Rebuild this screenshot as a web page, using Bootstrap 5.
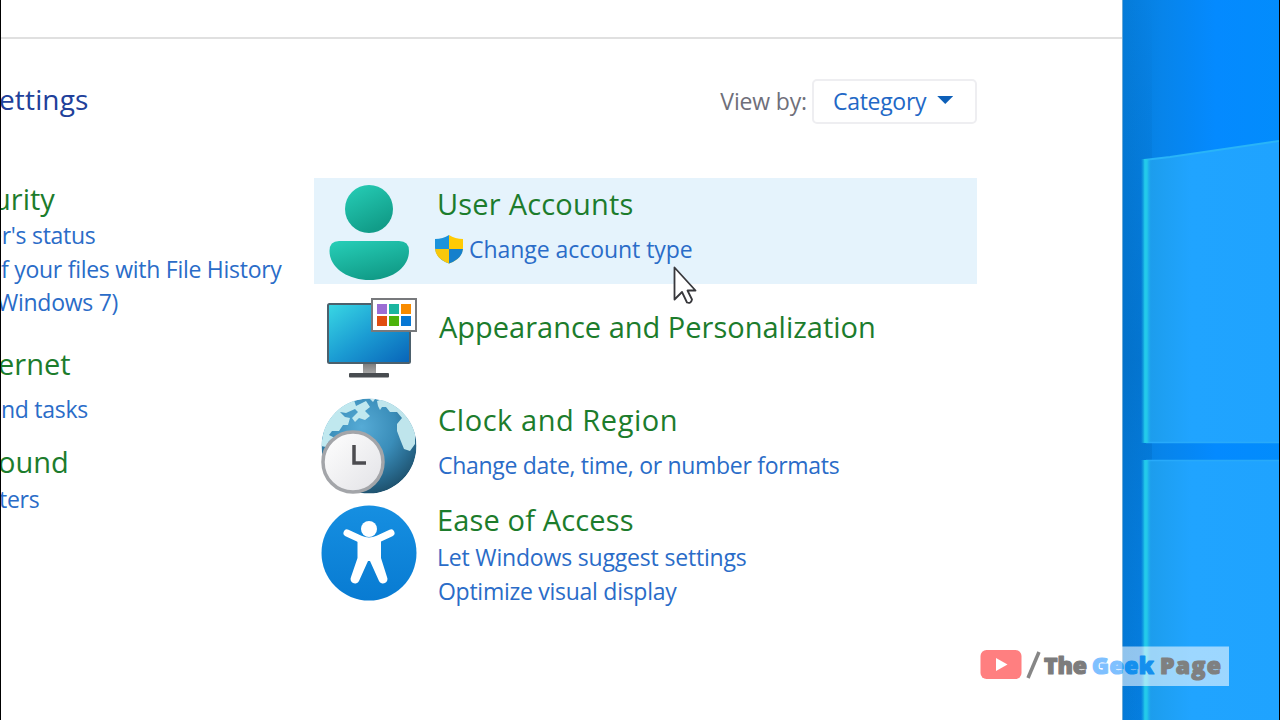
<!DOCTYPE html>
<html lang="en">
<head>
<meta charset="utf-8">
<meta name="viewport" content="width=device-width, initial-scale=1">
<title>Control Panel</title>
<link href="https://cdn.jsdelivr.net/npm/bootstrap@5.3.0/dist/css/bootstrap.min.css" rel="stylesheet">
<style>
  body { font-family: "Open Sans", "Noto Sans", sans-serif; background: #000; width: 1280px; height: 720px; overflow: hidden; }
  .desktop { width: 1280px; height: 720px; padding: 0 1px; }
  .panel { width: 1121px; background: #fff; }
  .topline { height: 39px; border-bottom: 2px solid #e0e0e0; }
  .toolbar-row { height: 45px; margin-top: 40px; padding-right: 145px; }
  .page-title { font-size: 28px; line-height: 40px; color: #20409a; margin-left: -2px; letter-spacing: .15px; }
  .view-label { font-size: 23px; line-height: 45px; color: #6f6f7a; letter-spacing: -.15px; margin-right: 5px; }
  .view-btn { width: 165px; height: 45px; border: 2px solid #eeeef1; border-radius: 5px; font-size: 23px; line-height: 41px; color: #2268c6; background: #fff; padding: 0 0 0 19px; letter-spacing: -.3px; }
  .tri { width: 16px; height: 8px; margin: 0 0 3px 11px; background: #0d5fb8; clip-path: polygon(0 0, 100% 0, 50% 100%); }
  .cat { font-size: 29px; line-height: 40px; color: #1c7c2c; white-space: nowrap; font-weight: 400; margin: 0; }
  .task { font-size: 23px; line-height: 34px; color: #2a6cc8; white-space: nowrap; text-decoration: none; display: block; letter-spacing: -.27px; }
  .columns { margin-top: 54px; }
  .col-left { width: 313px; padding-top: 1px; }
  .col-left .block { height: 165px; }
  .col-left .block + .block { height: 98px; }
  .col-right { width: 663px; }
  .entry { height: 107px; padding: 6px 0 0 7px; }
  .entry.hot { background: #e5f3fc; height: 106px; margin-bottom: 1px; }
  .ico { width: 96px; height: 96px; flex: none; }
  .txt { margin-left: 21px; }
  .shield { width: 28px; height: 29px; margin: 3px 6px 0 -3px; }
  .cursor { left: 672px; top: 265px; }
  .brand { left: 978px; top: 644px; }
  .brand text { font-family: "Open Sans", sans-serif; font-weight: 800; font-size: 23px; stroke-width: 1.2; stroke-linejoin: round; }
</style>
</head>
<body>
<div class="desktop d-flex position-relative">
  <main class="panel overflow-hidden">
    <div class="topline"></div>
    <header class="toolbar-row d-flex justify-content-between">
      <h1 class="page-title">ettings</h1>
      <div class="d-flex">
        <span class="view-label">View by:</span>
        <button type="button" class="view-btn d-flex align-items-center"><span>Category</span><span class="tri"></span></button>
      </div>
    </header>
    <div class="columns d-flex">
      <section class="col-left">
        <div class="block">
          <h2 class="cat" style="text-indent:-8px">urity</h2>
          <a class="task" style="text-indent:-12px;line-height:33px">er's status</a>
          <a class="task">f your files with File History</a>
          <a class="task" style="text-indent:-4px;line-height:33px">Windows 7)</a>
        </div>
        <div class="block">
          <h2 class="cat" style="text-indent:-3px">ernet</h2>
          <a class="task mt-2">nd tasks</a>
        </div>
        <div class="block">
          <h2 class="cat" style="text-indent:-3px">ound</h2>
          <a class="task" style="text-indent:-2px">ters</a>
        </div>
      </section>
      <section class="col-right">
        <div class="entry hot d-flex">
          <svg class="ico" viewBox="0 0 96 96">
            <defs><linearGradient id="teal" x1="0" y1="0" x2=".5" y2="1"><stop offset="0" stop-color="#27cfb8"/><stop offset="1" stop-color="#119c88"/></linearGradient></defs>
            <circle cx="48" cy="25" r="24" fill="url(#teal)"/>
            <path d="M18 57H78Q88 57 88 67C88 84 70 96 48.500 96S8.500 84 8.500 67Q8.500 57 18 57Z" fill="url(#teal)"/>
          </svg>
          <div class="txt">
            <h2 class="cat" style="letter-spacing:.2px;text-indent:-1px">User Accounts</h2>
            <div class="d-flex mt-2">
              <svg class="shield" viewBox="0 0 28 29">
                <path d="M14 0Q8 4 0 4V13Q1 24 14 28.500Z" fill="#1c93dc"/>
                <path d="M14 0Q20 4 28 4V13Q27 24 14 28.500Z" fill="#ffcb05"/>
                <path d="M0 14H14V28.500Q1 24 0 14Z" fill="#f8c80c"/>
                <path d="M14 14H28Q27 24 14 28.500Z" fill="#1580cc"/>
              </svg>
              <a class="task" style="letter-spacing:-.05px">Change account type</a>
            </div>
          </div>
        </div>
        <div class="entry d-flex">
          <svg class="ico" viewBox="0 0 96 96">
            <defs>
              <linearGradient id="scr" x1="0" y1="0" x2="1" y2="1"><stop offset="0" stop-color="#39d8e4"/><stop offset=".5" stop-color="#1b9cd3"/><stop offset="1" stop-color="#0863b8"/></linearGradient>
              <linearGradient id="neck" x1="0" y1="0" x2="0" y2="1"><stop offset="0" stop-color="#777"/><stop offset="1" stop-color="#aaa"/></linearGradient>
            </defs>
            <rect x="42" y="71" width="13" height="12" fill="url(#neck)"/>
            <rect x="28" y="82" width="40" height="4.500" rx="1" fill="#484c50"/>
            <rect x="7" y="13" width="82" height="59" rx="1.500" fill="url(#scr)" stroke="#4c606c" stroke-width="2"/>
            <rect x="51" y="8" width="44" height="32" fill="#fff" stroke="#77797c" stroke-width="2"/>
            <path fill="#9b6dd4" d="M56 13h10v10H56z"/><path fill="#1bb5a0" d="M68 13h10v10H68z"/><path fill="#f88b00" d="M80 13h10v10H80z"/>
            <path fill="#e04e10" d="M56 25h10v10H56z"/><path fill="#4db30c" d="M68 25h10v10H68z"/><path fill="#0878d4" d="M80 25h10v10H80z"/>
          </svg>
          <div class="txt pt-3"><h2 class="cat" style="text-indent:1px">Appearance and Personalization</h2></div>
        </div>
        <div class="entry d-flex">
          <svg class="ico" viewBox="0 0 96 96">
            <defs>
              <radialGradient id="sea" cx=".42" cy=".3" r=".72"><stop offset="0" stop-color="#56abd6"/><stop offset=".5" stop-color="#3a8db9"/><stop offset=".8" stop-color="#28698d"/><stop offset="1" stop-color="#1e516d"/></radialGradient>
              <linearGradient id="face" x1="0" y1="0" x2="1" y2="1"><stop offset="0" stop-color="#fff"/><stop offset="1" stop-color="#e2e2e6"/></linearGradient>
              <clipPath id="gl"><circle cx="48" cy="48" r="47.500"/></clipPath>
            </defs>
            <g clip-path="url(#gl)">
              <circle cx="48" cy="48" r="47.500" fill="url(#sea)"/>
              <path d="M0 48L4 26L19 9L33 2L35 8L45 3L49 9L44 13L49 18L44 22L38 20L34 24L31 20L37 14L34 11L25 15L19 14L24 19L29 20L27 27L22 27L18 33L11 33L8 37L14 40L8 43L5 49Z" fill="#c0e8ef"/>
              <path d="M56 3L64 0L79 7L90 22L94 35L94 46L89 53L83 51L79 41L76 33L76 26L81 20L76 14L69 14L65 9L61 9L59 12L57 8Z" fill="#bfe5ec"/>
              <path d="M49 1L54 1L52 4Z" fill="#c8e8ef"/>
            </g>
            <circle cx="32" cy="64" r="30" fill="url(#face)" stroke="#a3a5a9" stroke-width="3.500"/>
            <path d="M33 47V65H45" fill="none" stroke="#4c4c50" stroke-width="3.500"/>
          </svg>
          <div class="txt" style="padding-top:2px"><h2 class="cat" style="letter-spacing:.55px">Clock and Region</h2>
            <a class="task" style="letter-spacing:-.3px;margin-top:8px">Change date, time, or number formats</a></div>
        </div>
        <div class="entry d-flex">
          <svg class="ico" viewBox="0 0 96 96">
            <defs><linearGradient id="acc" x1="0" y1="0" x2="0" y2="1"><stop offset="0" stop-color="#168fe1"/><stop offset="1" stop-color="#087bd2"/></linearGradient></defs>
            <circle cx="48" cy="48" r="47.500" fill="url(#acc)"/>
            <circle cx="48" cy="24" r="8" fill="#fff"/>
            <path d="M26 28L39 34Q48 38 57 34L70 28" fill="none" stroke="#fff" stroke-width="7" stroke-linecap="round" stroke-linejoin="round"/>
            <path d="M36.500 33Q48 40 60 33V53L66 72A4 4 0 0 1 58 76L49 56H47L38 76A4 4 0 0 1 30 72L36.500 53Z" fill="#fff"/>
          </svg>
          <div class="txt" style="margin-top:-6px;padding-top:6px"><h2 class="cat" style="letter-spacing:.15px;text-indent:-1px;margin-top:-5px">Ease of Access</h2>
            <a class="task" style="letter-spacing:-.18px;text-indent:-1px">Let Windows suggest settings</a>
            <a class="task">Optimize visual display</a></div>
        </div>
      </section>
    </div>
  </main>
  <svg class="wall" width="157" height="720" viewBox="1122 0 157 720">
    <defs>
      <linearGradient id="sky" x1="0" y1="0" x2="1" y2="0"><stop offset="0" stop-color="#057bd8"/><stop offset=".25" stop-color="#0784ea"/><stop offset=".6" stop-color="#048aff"/><stop offset="1" stop-color="#028cfc"/></linearGradient>
      <linearGradient id="dim" x1="0" y1="0" x2="0" y2="1"><stop offset="0" stop-color="#0060b0" stop-opacity="0"/><stop offset=".5" stop-color="#0060b0" stop-opacity=".35"/><stop offset="1" stop-color="#0070d0" stop-opacity=".1"/></linearGradient>
      <linearGradient id="pane" x1="0" y1="0" x2="1" y2="0"><stop offset="0" stop-color="#1c9cea"/><stop offset=".35" stop-color="#20a4ff"/><stop offset="1" stop-color="#1fa3ff"/></linearGradient>
      <linearGradient id="glow" x1="0" y1="0" x2="1" y2="0"><stop offset="0" stop-color="#16b4e4" stop-opacity="0"/><stop offset=".4" stop-color="#23cbea"/><stop offset=".6" stop-color="#23c8ea"/><stop offset="1" stop-color="#1eb4f0" stop-opacity="0"/></linearGradient>
    </defs>
    <rect x="1122" width="157" height="720" fill="url(#sky)"/>
    <rect x="1122" width="30" height="720" fill="url(#dim)"/>
    <path d="M1144 160L1170 157L1279 141V443H1144Z" fill="url(#pane)"/>
    <path d="M1144 160L1170 157L1279 141" fill="none" stroke="#29b4f8" stroke-width="2"/>
    <rect x="1144" y="460" width="135" height="260" fill="url(#pane)"/>
    <path d="M1146 442.500H1279M1146 460.500H1279" stroke="#28aafa" stroke-width="1.500"/>
    <rect x="1141" y="159" width="10" height="284" fill="url(#glow)"/>
    <rect x="1141" y="460" width="10" height="260" fill="url(#glow)"/>
    <rect x="1122" width="1" height="720" fill="#6aa9d6"/>
  </svg>
  <svg class="brand position-absolute" width="256" height="46" viewBox="978 644 256 46">
    <defs><linearGradient id="geek" gradientUnits="userSpaceOnUse" x1="1122" y1="0" x2="1123" y2="0"><stop offset="0" stop-color="#7fc0ff"/><stop offset="1" stop-color="#148fee"/></linearGradient></defs>
    <rect x="1122" y="646.500" width="107" height="39.500" fill="#fff" fill-opacity=".56"/>
    <rect x="980.500" y="650" width="41" height="29" rx="6" fill="#ff7f80"/>
    <path d="M996 658V671L1007.500 664.500Z" fill="#fff"/>
    <path d="M1028 678L1039 652" stroke="#868686" stroke-width="3.500"/>
    <text x="1044" y="673.500" fill="#7c7c7c" stroke="#7c7c7c" textLength="43">The</text>
    <text x="1092" y="673.500" fill="url(#geek)" stroke="url(#geek)" textLength="62">Geek</text>
    <text x="1160" y="673.500" fill="#7f8080" stroke="#7f8080" textLength="61">Page</text>
  </svg>
  <svg class="cursor position-absolute" width="26" height="40" viewBox="672 265 26 40">
    <path d="M674.500 267.500V299.500L682 292L687 302.500Q691 304 692 299.500L687.500 290.500H695.500Z" fill="#fff" stroke="#38383c" stroke-width="1.800" stroke-linejoin="round"/>
  </svg>
</div>
<script src="https://cdn.jsdelivr.net/npm/bootstrap@5.3.0/dist/js/bootstrap.bundle.min.js"></script>
</body>
</html>
